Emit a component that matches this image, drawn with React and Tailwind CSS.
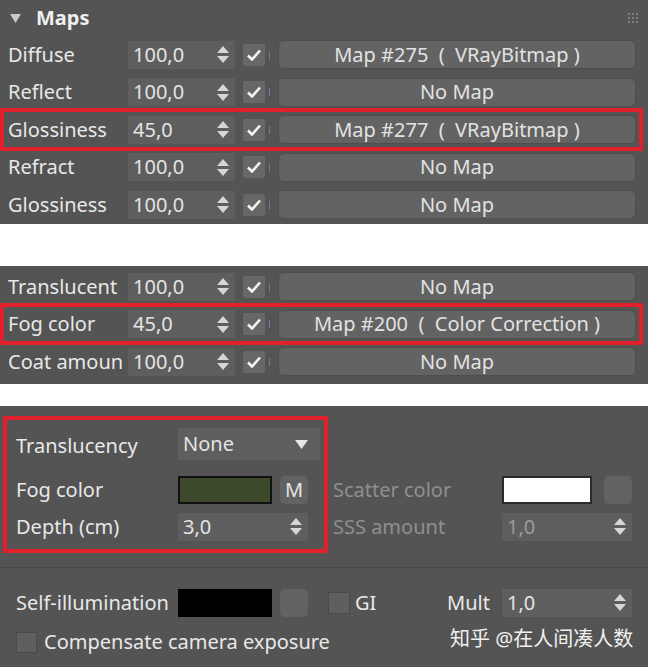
import React from "react";

const font = { fontFamily: '"Noto Sans", "Noto Sans CJK SC", sans-serif' };

function Spin({ className = "" }) {
  return (
    <svg width="12" height="17" viewBox="0 0 12 17" className={className}>
      <path d="M6 0 L12 7 L0 7 Z" fill="#d6d6d6" />
      <path d="M0 10 L12 10 L6 17 Z" fill="#d6d6d6" />
    </svg>
  );
}

function Check() {
  return (
    <div className="w-[22px] h-[22px] bg-[#676767] rounded-[2px] flex items-center justify-center">
      <svg width="14" height="12" viewBox="0 0 14 12">
        <path d="M1 6.5 L5 10.5 L13 1.5" stroke="#f2f2f2" strokeWidth="2.6" fill="none" />
      </svg>
    </div>
  );
}

function NumField({ value, w = "w-[107px]", dim = false }) {
  return (
    <div className={`${w} h-[28px] bg-[#5e5e5e] flex items-center justify-between pl-[5px] pr-[6px]`}>
      <span className={`text-[20px] ${dim ? "text-[#9a9a9a]" : "text-[#e4e4e4]"}`}>{value}</span>
      <Spin />
    </div>
  );
}

function MapRow({ label, value, map, hl }) {
  return (
    <div className="relative h-[37.5px] flex items-center">
      {/* label is clipped like the original rollout ("Coat amoun") */}
      <div className="w-[114px] ml-[8px] mr-[6px] text-[20px] text-[#e8e8e8] whitespace-nowrap overflow-hidden">{label}</div>
      <NumField value={value} />
      <div className="ml-[8px]"><Check /></div>
      <div className="ml-[4px] w-[1px] h-[8px] bg-[#6d7ba0]" />
      <div className="ml-[8px] w-[358px] h-[29px] rounded-[6px] bg-[#636363] border border-[#4e4e4e] flex items-center justify-center text-[20px] text-[#e2e2e2] whitespace-pre">
        {map}
      </div>
      {hl && (
        <div className="absolute left-0 right-[5px] -top-[3px] -bottom-[2px] border-4 border-[#e0202b] pointer-events-none" />
      )}
    </div>
  );
}

export default function App() {
  return (
    <div className="w-[648px] h-[667px] bg-white overflow-hidden" style={font}>
      {/* Maps */}
      <div className="bg-[#545454] h-[224px]">
        <div className="h-[36px] flex items-center pl-[10px] relative">
          <svg width="11" height="9" viewBox="0 0 11 9"><path d="M0 0 L11 0 L5.5 9 Z" fill="#c9c9c9" /></svg>
          <span className="ml-[15px] text-[20px] font-bold text-[#f0f0f0]">Maps</span>
          <div className="absolute right-[10px] top-[13px] grid grid-cols-3 gap-[2px]">
            {Array.from({ length: 9 }).map((_, i) => (
              <div key={i} className="w-[2px] h-[2px] bg-[#808080]" />
            ))}
          </div>
        </div>
        <MapRow label="Diffuse" value="100,0" map="Map #275  (  VRayBitmap )" />
        <MapRow label="Reflect" value="100,0" map="No Map" />
        <MapRow label="Glossiness" value="45,0" map="Map #277  (  VRayBitmap )" hl />
        <MapRow label="Refract" value="100,0" map="No Map" />
        <MapRow label="Glossiness" value="100,0" map="No Map" />
      </div>

      <div className="h-[42px]" />

      <div className="bg-[#545454] h-[118px] pt-[2px]">
        <MapRow label="Translucent" value="100,0" map="No Map" />
        <MapRow label="Fog color" value="45,0" map="Map #200  (  Color Correction )" hl />
        <MapRow label="Coat amount" value="100,0" map="No Map" />
      </div>

      <div className="h-[22px]" />

      <div className="bg-[#545454] h-[261px] pt-[10px]">
        <div className="flex">
          <div className="ml-[3px] w-[325px] h-[137px] border-4 border-[#e0202b] pl-[9px] pt-[8px] flex flex-col">
            <div className="h-[32px] flex items-center">
              <div className="w-[162px] pt-[4px] text-[20px] text-[#e8e8e8]">Translucency</div>
              <div className="w-[142px] h-[32px] bg-[#5e5e5e] flex items-center justify-between pl-[5px] pr-[12px]">
                <span className="text-[20px] text-[#e4e4e4]">None</span>
                <svg width="13" height="9" viewBox="0 0 13 9"><path d="M0 0 L13 0 L6.5 9 Z" fill="#e6e6e6" /></svg>
              </div>
            </div>
            <div className="h-[28px] mt-[16px] flex items-center">
              <div className="w-[162px] text-[20px] text-[#e8e8e8]">Fog color</div>
              <div className="w-[94px] h-[28px] bg-[#3c4a2b] border-2 border-[#111]" />
              <div className="ml-[8px] w-[28px] h-[28px] rounded-[5px] bg-[#626262] flex items-center justify-center text-[20px] text-[#e4e4e4]">M</div>
            </div>
            <div className="h-[29px] mt-[8px] flex items-center">
              <div className="w-[162px] text-[20px] text-[#e8e8e8]">Depth (cm)</div>
              <NumField value="3,0" w="w-[130px]" />
            </div>
          </div>
          <div className="ml-[5px] flex-1 pt-[60px] flex flex-col">
            <div className="h-[28px] flex items-center">
              <div className="w-[169px] text-[20px] text-[#8f8f8f]">Scatter color</div>
              <div className="w-[90px] h-[28px] bg-white border-2 border-[#2a2a2a]" />
              <div className="ml-[12px] w-[28px] h-[28px] rounded-[5px] bg-[#626262]" />
            </div>
            <div className="h-[29px] mt-[8px] flex items-center">
              <div className="w-[169px] text-[20px] text-[#8f8f8f]">SSS amount</div>
              <NumField value="1,0" w="w-[130px]" dim />
            </div>
          </div>
        </div>

        <div className="mt-[14px] border-t border-[#464646]" />

        <div className="mt-[20px] h-[29px] flex items-center pl-[16px]">
          <div className="w-[162px] text-[20px] text-[#e8e8e8]">Self-illumination</div>
          <div className="w-[94px] h-[28px] bg-black" />
          <div className="ml-[8px] w-[28px] h-[28px] rounded-[5px] bg-[#626262]" />
          <div className="ml-[20px] w-[22px] h-[22px] bg-[#5f5f5f] border border-[#4a4a4a]" />
          <span className="ml-[5px] w-[92px] text-[20px] text-[#e8e8e8]">GI</span>
          <span className="w-[55px] text-[20px] text-[#e8e8e8]">Mult</span>
          <NumField value="1,0" w="w-[130px]" />
        </div>

        <div className="mt-[10px] flex items-center pl-[16px]">
          <div className="w-[21px] h-[21px] bg-[#5f5f5f] border border-[#4a4a4a]" />
          <span className="ml-[7px] w-[406px] text-[20px] text-[#e8e8e8]">Compensate camera exposure</span>
          <span className="-mt-[6px] text-[20px] text-[#f0f0f0]">知乎 @在人间凑人数</span>
        </div>
      </div>
    </div>
  );
}
